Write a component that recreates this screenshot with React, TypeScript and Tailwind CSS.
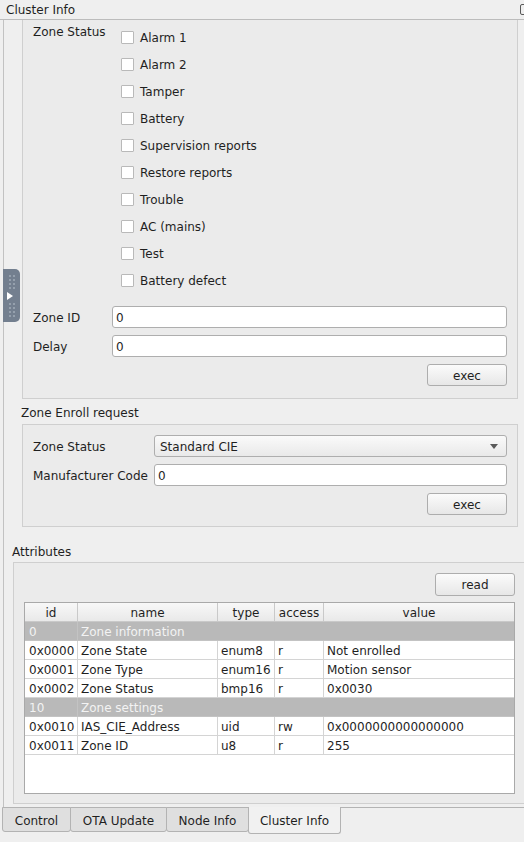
import React from 'react'

const zoneBits = [
  'Alarm 1',
  'Alarm 2',
  'Tamper',
  'Battery',
  'Supervision reports',
  'Restore reports',
  'Trouble',
  'AC (mains)',
  'Test',
  'Battery defect',
]

type Row = { group?: boolean; id: string; name: string; type?: string; access?: string; value?: string }

const rows: Row[] = [
  { group: true, id: '0', name: 'Zone information' },
  { id: '0x0000', name: 'Zone State', type: 'enum8', access: 'r', value: 'Not enrolled' },
  { id: '0x0001', name: 'Zone Type', type: 'enum16', access: 'r', value: 'Motion sensor' },
  { id: '0x0002', name: 'Zone Status', type: 'bmp16', access: 'r', value: '0x0030' },
  { group: true, id: '10', name: 'Zone settings' },
  { id: '0x0010', name: 'IAS_CIE_Address', type: 'uid', access: 'rw', value: '0x0000000000000000' },
  { id: '0x0011', name: 'Zone ID', type: 'u8', access: 'r', value: '255' },
]

function Checkbox({ label }: { label: string }) {
  return (
    <div className="h-[27px] flex items-center">
      <div className="w-[13px] h-[13px] bg-white border border-[#b9b9b9] rounded-[1px]" />
      <span className="ml-[6px]">{label}</span>
    </div>
  )
}

function TextInput({ value, width }: { value: string; width: string }) {
  return (
    <div className={`${width} h-[22px] bg-white border border-[#aeaeae] rounded-[3px] flex items-center pl-[3px] pt-[1px]`}>
      {value}
    </div>
  )
}

function Button({ label, width = 'w-[80px]', height = 'h-[22px]' }: { label: string; width?: string; height?: string }) {
  return (
    <div
      className={`${width} ${height} border border-[#adadad] rounded-[3px] bg-gradient-to-b from-[#fbfbfb] to-[#e7e7e7] flex items-center justify-center pt-[1px]`}
    >
      {label}
    </div>
  )
}

function Tab({ label, width, selected }: { label: string; width: string; selected?: boolean }) {
  if (selected) {
    return (
      <div className={`${width} h-[27px] border-x border-b border-[#b3b3b3] rounded-b-[3px] bg-[#f1f1f1] flex items-center justify-center pt-[2px]`}>
        {label}
      </div>
    )
  }
  return (
    <div className={`${width} h-[25px] border border-[#b3b3b3] rounded-b-[3px] bg-[#dfdfdf] flex items-center justify-center pt-[3px] -mr-px`}>
      {label}
    </div>
  )
}

const cols = 'grid grid-cols-[53px_140px_57px_49px_1fr] h-[19px]'

export default function App() {
  return (
    <div className="w-[524px] h-[842px] bg-[#efefef] overflow-hidden relative font-['DejaVu_Sans',sans-serif] text-[12px] leading-[14px] text-[#1f1f1f]">
      {/* dock title */}
      <div className="h-[20px] border-b border-[#bcbcbc] flex items-center pl-[6px]">
        <span>Cluster Info</span>
        <div className="ml-auto -mr-[6px] w-[10px] h-[11px] border border-[#5a5a5a] rounded-[2px]" />
      </div>

      {/* scroll area */}
      <div className="ml-[3px] w-[530px] h-[787px] border-l border-[#c2c2c2] flex flex-col">
        {/* Zone Status group (top scrolled away) */}
        <div className="ml-[18px] w-[496px] border-x border-b border-[#cfcfcf] bg-[#ebebeb] pt-[4px] pl-[10px] pr-[10px] pb-[12px]">
          <div className="flex">
            <div className="w-[79px] pt-[1px]">Zone Status</div>
            <div className="pl-[9px] flex flex-col">
              {zoneBits.map((b) => (
                <Checkbox key={b} label={b} />
              ))}
            </div>
          </div>
          <div className="mt-[12px] flex flex-col gap-[7px]">
            <div className="flex items-center">
              <div className="w-[79px] pt-[2px]">Zone ID</div>
              <TextInput value="0" width="w-[395px]" />
            </div>
            <div className="flex items-center">
              <div className="w-[79px] pt-[2px]">Delay</div>
              <TextInput value="0" width="w-[395px]" />
            </div>
            <div className="flex justify-end">
              <Button label="exec" />
            </div>
          </div>
        </div>

        {/* Zone Enroll request */}
        <div className="h-[25px] pl-[17px] pt-[7px]">Zone Enroll request</div>
        <div className="ml-[18px] w-[496px] border border-[#cfcfcf] bg-[#ebebeb] pt-[10px] px-[10px] pb-[11px] flex flex-col gap-[7px]">
          <div className="flex items-center">
            <div className="w-[121px] pt-[2px]">Zone Status</div>
            <div className="w-[353px] h-[22px] border border-[#aeaeae] rounded-[3px] bg-gradient-to-b from-[#fafafa] to-[#e9e9e9] flex items-center pl-[5px] pr-[8px]">
              <span className="pt-[1px]">Standard CIE</span>
              <svg className="ml-auto" width="8" height="5" viewBox="0 0 8 5">
                <path d="M0 0h8L4 5z" fill="#5a5a5a" />
              </svg>
            </div>
          </div>
          <div className="flex items-center">
            <div className="w-[121px] pt-[2px]">Manufacturer Code</div>
            <TextInput value="0" width="w-[353px]" />
          </div>
          <div className="flex justify-end">
            <Button label="exec" />
          </div>
        </div>

        {/* Attributes */}
        <div className="h-[35px] pl-[8px] pt-[18px]">Attributes</div>
        <div className="ml-[9px] w-[520px] border-l border-y border-[#cfcfcf] bg-[#ebebeb] pt-[10px] pl-[10px] pb-[9px]">
          <div className="w-[491px] flex justify-end">
            <Button label="read" width="w-[80px]" height="h-[23px]" />
          </div>
          <div className="mt-[6px] w-[491px] h-[192px] border border-[#a9a9a9] bg-white flex flex-col">
            <div className={`${cols} bg-gradient-to-b from-[#f8f8f8] to-[#e8e8e8]`}>
              {['id', 'name', 'type', 'access', 'value'].map((h, i) => (
                <div
                  key={h}
                  className={`flex items-center justify-center pt-[2px] border-b border-[#c9c9c9] ${i < 4 ? 'border-r' : ''}`}
                >
                  {h}
                </div>
              ))}
            </div>
            {rows.map((r) =>
              r.group ? (
                <div key={r.id} className={`${cols} bg-[#b9b9b9] text-[#f3f3f3]`}>
                  <div className="flex items-center pl-[4px] pt-[2px] border-r border-b border-[#c3c3c3]">{r.id}</div>
                  <div className="col-span-4 flex items-center pl-[3px] pt-[2px] border-b border-[#c3c3c3]">{r.name}</div>
                </div>
              ) : (
                <div key={r.id} className={cols}>
                  <div className="flex items-center pl-[4px] pt-[2px] border-r border-b border-[#d4d4d4]">{r.id}</div>
                  <div className="flex items-center pl-[3px] pt-[2px] border-r border-b border-[#d4d4d4]">{r.name}</div>
                  <div className="flex items-center pl-[3px] pt-[2px] border-r border-b border-[#d4d4d4] overflow-hidden whitespace-nowrap">{r.type}</div>
                  <div className="flex items-center pl-[3px] pt-[2px] border-r border-b border-[#d4d4d4]">{r.access}</div>
                  <div className="flex items-center pl-[3px] pt-[2px] border-b border-[#d4d4d4]">{r.value}</div>
                </div>
              )
            )}
          </div>
        </div>
      </div>

      {/* tab bar */}
      <div className="flex items-start pl-[2px]">
        <Tab label="Control" width="w-[69px]" />
        <Tab label="OTA Update" width="w-[97px]" />
        <Tab label="Node Info" width="w-[83px]" />
        <Tab label="Cluster Info" width="w-[93px]" selected />
        <div className="flex-1 border-t border-[#b3b3b3]" />
      </div>

      {/* collapsed side panel handle */}
      <div className="absolute left-[3px] top-[269px] w-[17px] h-[53px] bg-[#737f8f] rounded-r-[5px] flex flex-col items-center justify-center">
        <div className="grid grid-cols-2 gap-[2px] mb-[3px]">
          {Array.from({ length: 8 }).map((_, i) => (
            <div key={i} className="w-[2px] h-[2px] bg-[#95a0ad]" />
          ))}
        </div>
        <svg width="6" height="8" viewBox="0 0 6 8" className="-ml-[3px]">
          <path d="M0 0L6 4L0 8z" fill="#ffffff" />
        </svg>
        <div className="grid grid-cols-2 gap-[2px] mt-[3px]">
          {Array.from({ length: 8 }).map((_, i) => (
            <div key={i} className="w-[2px] h-[2px] bg-[#95a0ad]" />
          ))}
        </div>
      </div>
    </div>
  )
}
